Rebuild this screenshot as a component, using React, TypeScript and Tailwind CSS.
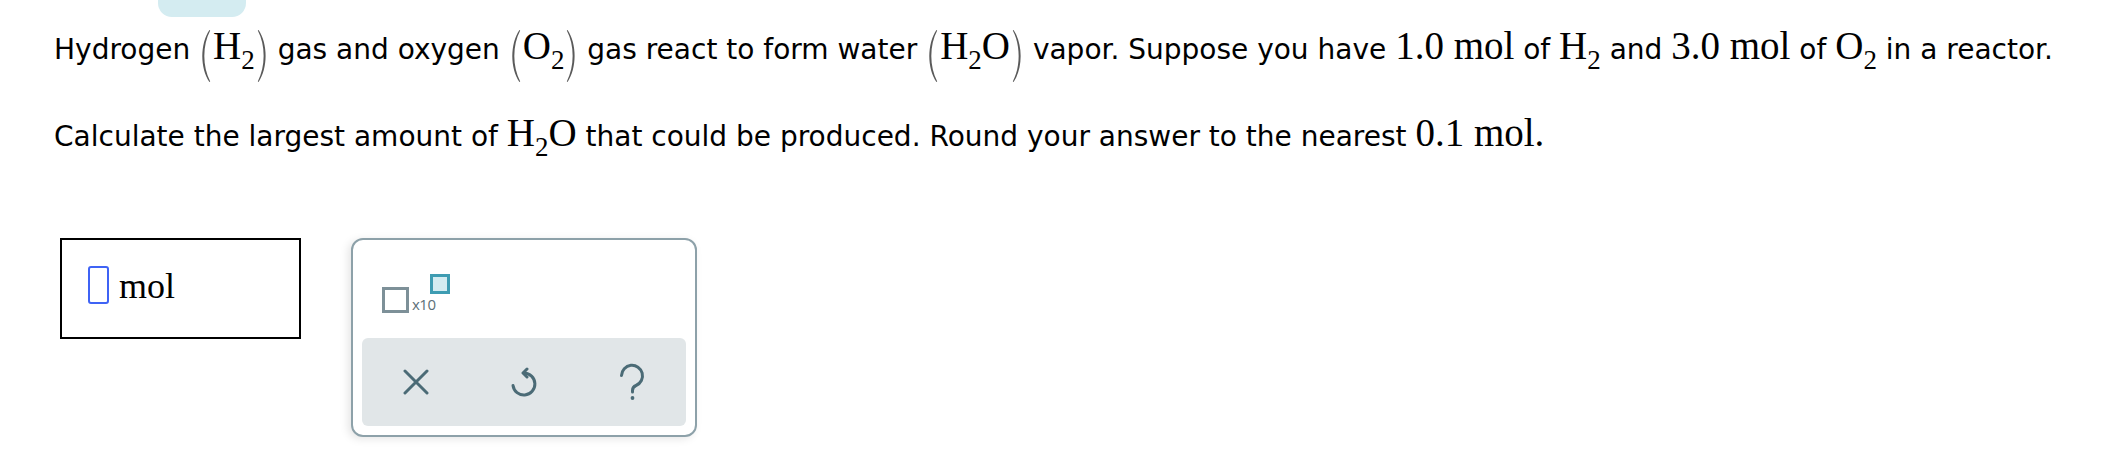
import React from "react";

const Sub = ({ children }: { children: React.ReactNode }) => (
  <span className="relative top-[10px] text-[27px]">{children}</span>
);

const M = ({ children }: { children: React.ReactNode }) => (
  <span className="font-['Liberation_Serif',serif] text-[39px] leading-[20px]">{children}</span>
);

const LP = () => (
  <svg width="12" height="54" viewBox="0 0 12 54" className="inline-block align-[-24px] mr-[2px]">
    <path d="M10.4 1 C1 15 1 39 10.4 53 L11.2 52.4 C3.4 38 3.4 16 11.2 1.6 Z" fill="#5a5a5a" />
  </svg>
);
const RP = () => (
  <svg width="12" height="54" viewBox="0 0 12 54" className="inline-block align-[-24px] ml-[2px]">
    <path d="M1.6 1 C11 15 11 39 1.6 53 L0.8 52.4 C8.6 38 8.6 16 0.8 1.6 Z" fill="#5a5a5a" />
  </svg>
);

const XIcon = () => (
  <svg width="26" height="26" viewBox="0 0 26 26">
    <path d="M2 2 L24 24 M24 2 L2 24" stroke="#4b6b76" strokeWidth="3" strokeLinecap="round" fill="none" />
  </svg>
);

const UndoIcon = () => (
  <svg width="28" height="31" viewBox="0 0 28 31">
    <path d="M3 18.5 A11 11 0 1 0 14 6" stroke="#4b6b76" strokeWidth="3" strokeLinecap="round" fill="none" />
    <path d="M17 2 L13 6 L17 10" stroke="#4b6b76" strokeWidth="3" strokeLinecap="round" strokeLinejoin="round" fill="none" />
  </svg>
);

const QIcon = () => (
  <svg width="27" height="38" viewBox="0 0 27 38">
    <path d="M2.5 12.5 A10.5 10.5 0 1 1 17 22.5 Q13.5 24 13.5 27.5 V29" stroke="#4b6b76" strokeWidth="3" strokeLinecap="round" fill="none" />
    <circle cx="13.5" cy="35" r="1.9" fill="#4b6b76" />
  </svg>
);

export default function App() {
  return (
    <div className="w-[2124px] h-[466px] bg-white text-black font-['DejaVu_Sans',sans-serif] overflow-hidden">
      <div className="ml-[158px] w-[88px] h-[17px] rounded-b-[14px] bg-[#d4ecf1]" />
      <div className="ml-[54px] mt-[12px] h-[40px] leading-[40px] text-[28px] whitespace-nowrap">
        Hydrogen <LP />
        <M>
          H<Sub>2</Sub>
        </M>
        <RP /> gas and oxygen <LP />
        <M>
          O<Sub>2</Sub>
        </M>
        <RP /> gas react to form water <LP />
        <M>
          H<Sub>2</Sub>O
        </M>
        <RP /> vapor. Suppose you have <M>1.0 mol</M> of{" "}
        <M>
          H<Sub>2</Sub>
        </M>{" "}
        and <M>3.0 mol</M> of{" "}
        <M>
          O<Sub>2</Sub>
        </M>{" "}
        in a reactor.
      </div>
      <div className="ml-[54px] mt-[48px] h-[40px] leading-[40px] text-[28px] whitespace-nowrap">
        Calculate the largest amount of{" "}
        <M>
          H<Sub>2</Sub>O
        </M>{" "}
        that could be produced. Round your answer to the nearest <M>0.1 mol.</M>
      </div>
      <div className="ml-[60px] mt-[81px] flex items-start gap-[50px]">
        <div className="w-[241px] h-[101px] border-2 border-black flex items-start pl-[26px] pt-[26px]">
          <div className="w-[21px] h-[38px] border-[2.5px] border-[#3f63f5] rounded-[3px]" />
          <span className="ml-[10px] font-['Liberation_Serif',serif] text-[36px] leading-[36px] mt-[2px]">mol</span>
        </div>
        <div className="w-[346px] h-[199px] border-2 border-[#8da1a9] rounded-[12px] bg-white shadow-[-3px_2px_8px_rgba(0,0,0,0.10)] p-[9px] flex flex-col">
          <div className="h-[89px] relative">
            <div className="absolute left-[20px] top-[38px] w-[27px] h-[26px] border-[3px] border-[#7d9098] bg-white" />
            <span className="absolute left-[50px] top-[47px] text-[15px] leading-[16px] tracking-[-0.5px] text-[#5c6f77] font-['Open_Sans',sans-serif]">x10</span>
            <div className="absolute left-[68px] top-[25px] w-[20px] h-[20px] border-[3px] border-[#3e9cb2] bg-[#d4ecf1]" />
          </div>
          <div className="flex-1 bg-[#e1e6e8] rounded-[6px] grid grid-cols-3 items-center justify-items-center">
            <XIcon />
            <UndoIcon />
            <QIcon />
          </div>
        </div>
      </div>
    </div>
  );
}
